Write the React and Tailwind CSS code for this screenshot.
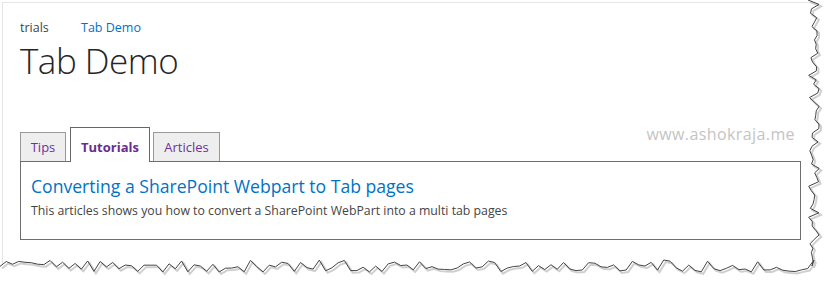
import React from "react";

// deterministic jagged "torn paper" edge
function tornPoints(seed, count, from, to, base, amp, vertical) {
  let s = seed;
  const rnd = () => {
    s = (s * 16807) % 2147483647;
    return s / 2147483647;
  };
  const pts = [];
  const step = (to - from) / count;
  for (let i = 0; i <= count; i++) {
    const t = from + i * step;
    const off = base + (rnd() - 0.5) * amp;
    pts.push(vertical ? [off, t] : [t, off]);
  }
  return pts;
}

const right = tornPoints(7, 60, 0, 266, 814, 12, true);
const bottom = tornPoints(13, 130, 814, 0, 266, 12, false);
const edge = [...right, ...bottom];
const edgeStr = edge.map((p) => p.join(",")).join(" ");
const shadowStr = edge.map((p) => `${p[0] + 2},${p[1] + 2}`).join(" ");

const font = { fontFamily: '"Open Sans", "Noto Sans", sans-serif' };

export default function App() {
  return (
    <div className="relative w-[830px] h-[286px] bg-white overflow-hidden" style={font}>
      <div className="absolute left-[2px] top-[2px] w-[820px] h-[280px] border-l border-t border-[#e6e6e6]" />

      <div className="relative px-[20px] pt-[20px]">
        {/* breadcrumb */}
        <div className="flex items-center text-[12.5px] leading-[16px]">
          <span className="text-[#444] w-[61px]">trials</span>
          <span className="text-[#0072c6]">Tab Demo</span>
        </div>
        <h1 className="mt-[1px] text-[35px] leading-[48px] font-light text-[#262626] tracking-[-0.5px]">
          Tab Demo
        </h1>

        {/* tabs */}
        <div className="mt-[41px] h-[35px] flex items-end justify-between w-[780px]">
          <div className="flex items-end relative z-10">
            <div className="h-[29px] w-[46px] pb-[4px] flex items-end justify-center bg-[#eeeeee] border border-b-0 border-[#999] text-[13px] text-[#7030a0]">
              Tips
            </div>
            <div className="ml-[4px] h-[35px] w-[80px] pb-[5px] flex items-end justify-center bg-white border border-b-0 border-[#666] text-[13px] font-bold text-[#6a2c91] mb-[-1px]">
              Tutorials
            </div>
            <div className="ml-[3px] h-[29px] w-[67px] pb-[4px] flex items-end justify-center bg-[#eeeeee] border border-b-0 border-[#999] text-[13px] text-[#7030a0]">
              Articles
            </div>
          </div>
          <div className="self-start mt-[-3px] mr-[5px] text-[16px] leading-[22px] text-[#c4c4c4] tracking-[0.4px]">
            www.ashokraja.me
          </div>
        </div>

        {/* tab content */}
        <div className="w-[781px] h-[79px] border border-[#6e6e6e] px-[10px] pt-[13px]">
          <div className="text-[17.6px] leading-[22px] text-[#0072c6]">
            Converting a SharePoint Webpart to Tab pages
          </div>
          <div className="mt-[5px] text-[12.3px] leading-[17px] text-[#444]">
            This articles shows you how to convert a SharePoint WebPart into a multi tab pages
          </div>
        </div>
      </div>

      <svg className="absolute inset-0" width="830" height="286" viewBox="0 0 830 286">
        <polygon points={`${edgeStr} 0,286 830,286 830,0`} fill="white" />
        <polyline points={shadowStr} fill="none" stroke="#cfcfcf" strokeWidth="2" />
        <polyline points={edgeStr} fill="none" stroke="#444" strokeWidth="1" />
      </svg>
    </div>
  );
}
